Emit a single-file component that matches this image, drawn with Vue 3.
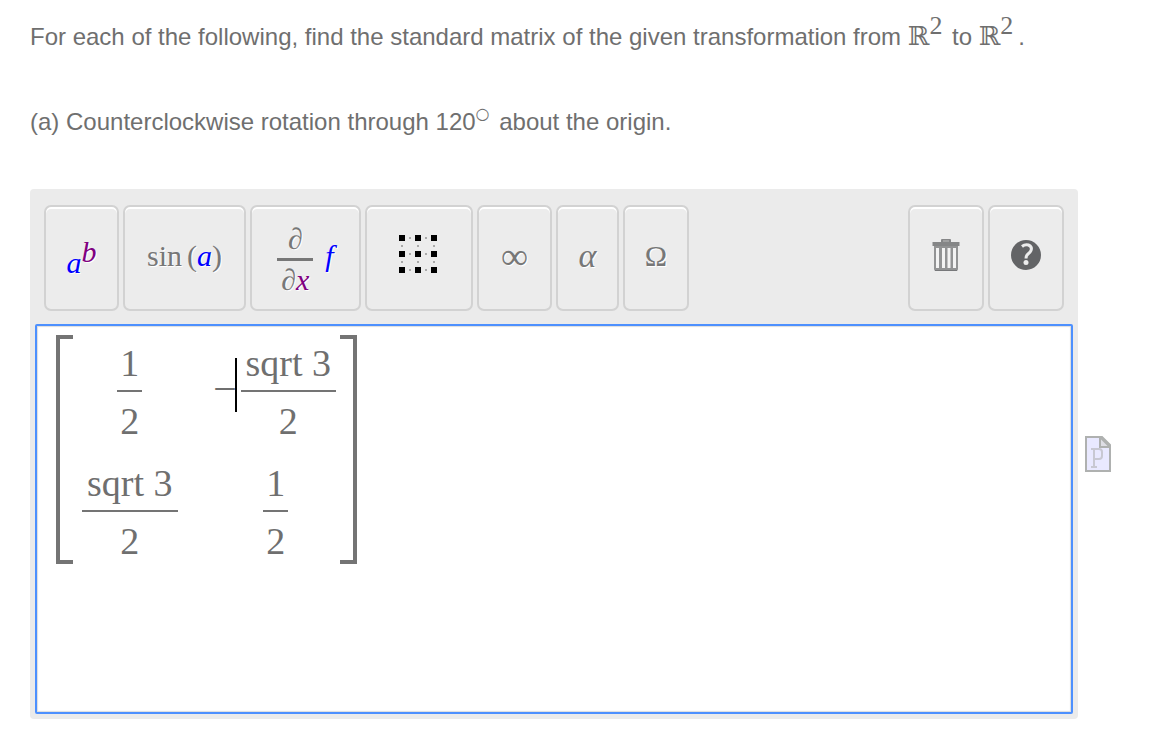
<script setup>
import { ref } from "vue";

const editor = ref(null);

const focusEditor = () => {
  editor.value.focus();
};

const dots = [0, 1, 2];
const smallDots = [0, 1];
</script>

<template>
  <main class="question">
    <p class="intro">
      For each of the following, find the standard matrix of the given transformation from
      <span class="math">ℝ<sup>2</sup></span> to <span class="math">ℝ<sup>2</sup></span>&hairsp;.
    </p>
    <p class="part">
      (a) Counterclockwise rotation through 120<sup class="degree">○</sup> about the origin.
    </p>

    <div class="answerRow">
      <section class="mathEditor">
        <div class="toolbar">
          <button type="button" class="tool power" aria-label="Exponent" @click="focusEditor">
            <span><i class="blue">a</i><sup><i class="purple">b</i></sup></span>
          </button>
          <button type="button" class="tool func" aria-label="Functions" @click="focusEditor">
            <span class="sine">sin<span class="argument">(<i class="blue">a</i>)</span></span>
          </button>
          <button type="button" class="tool calculus" aria-label="Calculus" @click="focusEditor">
            <span class="partial">
              <span class="partialTop">∂</span>
              <span class="partialBottom">∂<i class="purple">x</i></span>
            </span>
            <i class="blue">f</i>
          </button>
          <button type="button" class="tool grid" aria-label="Matrix" @click="focusEditor">
            <svg width="40" height="40" viewBox="0 0 40 40">
              <g v-for="r in dots" :key="r">
                <rect v-for="c in dots" :key="c" :x="c * 16" :y="r * 16" width="6" height="6" fill="#000" />
                <rect v-for="c in smallDots" :key="'h' + c" :x="10 + c * 16" :y="2 + r * 16" width="2" height="2" fill="#aaa" />
              </g>
              <g v-for="r in smallDots" :key="'v' + r">
                <rect v-for="c in dots" :key="c" :x="2 + c * 16" :y="10 + r * 16" width="2" height="2" fill="#aaa" />
              </g>
            </svg>
          </button>
          <button type="button" class="tool symbol" aria-label="Symbols" @click="focusEditor">∞</button>
          <button type="button" class="tool symbol alpha" aria-label="Greek lowercase" @click="focusEditor"><i>α</i></button>
          <button type="button" class="tool omega" aria-label="Greek uppercase" @click="focusEditor">Ω</button>
          <button type="button" class="tool action trash" aria-label="Clear">
            <svg width="28" height="32" viewBox="0 0 28 32">
              <path d="M9 3V1q0-1 1-1h8q1 0 1 1v2h8.500v4H.5V3z" fill="#858687" />
              <path d="M11 2h6" stroke="#bbb" />
              <path d="M2 7h24v23q0 2-2 2H4q-2 0-2-2z" fill="#929394" />
              <path d="M5.500 9v20M11.500 9v20M17 9v20M22.500 9v20" stroke="#f3f3f3" stroke-width="3" />
              <path d="M3 31.500h22" stroke="#77787a" />
            </svg>
          </button>
          <button type="button" class="tool action" aria-label="Help">
            <svg width="30" height="32" viewBox="0 0 30 32">
              <circle cx="15" cy="16" r="15" fill="#636466" />
              <path d="M11 7.500q3-2.500 6.500-1.500 4 1.500 2.500 5.500-.5 1.500-3 3.500-2 1.500-2 4.500" fill="none" stroke="#ececec" stroke-width="3" />
              <circle cx="15" cy="23.500" r="2.500" fill="#ececec" />
            </svg>
          </button>
        </div>

        <div ref="editor" class="entry" role="textbox" tabindex="0" aria-label="Answer">
          <div class="matrix">
            <span class="bracket left"></span>
            <div class="cells">
              <span class="cell">
                <span class="fraction short"><span>1</span><span>2</span></span>
              </span>
              <span class="cell">
                <span class="minus">–<span class="caret"></span></span>
                <span class="fraction"><span>sqrt 3</span><span>2</span></span>
              </span>
              <span class="cell">
                <span class="fraction"><span>sqrt 3</span><span>2</span></span>
              </span>
              <span class="cell">
                <span class="fraction short"><span>1</span><span>2</span></span>
              </span>
            </div>
            <span class="bracket right"></span>
          </div>
        </div>
      </section>

      <a class="preview" href="#" aria-label="Preview answer">
        <svg width="26" height="36" viewBox="0 0 26 36">
          <path d="M1 1h16l8 8v26H1z" fill="#e9e9ff" stroke="#afb1b0" stroke-width="2" />
          <path d="M15 1v10h10z" fill="#dedee5" stroke="#afb1b0" stroke-width="2" />
          <path d="M6 13h8q3 0 3 3v4q0 3-3 3H9M9 13v18M6 31h6" fill="none" stroke="#c8c8d2" stroke-width="2" />
        </svg>
      </a>
    </div>
  </main>
</template>

<style>
body {
  margin: 0;
  background: #fff;
}
</style>

<style scoped>
.question {
  padding: 20px 30px 16px;
  color: #6f6f6f;
  font-family: "Liberation Sans", Arial, sans-serif;
  font-size: 24px;
  line-height: 34px;
}

p {
  margin: 0;
}

.part {
  margin: 51px 0 50px;
}

sup {
  line-height: 0;
  vertical-align: 11px;
}

.math {
  font-family: "Liberation Serif", "DejaVu Serif", serif;
  font-size: 26px;
  line-height: 0;
}

.math sup {
  font-size: 26px;
  margin-right: 3px;
}

.degree {
  font-family: "DejaVu Sans", sans-serif;
  font-size: 16px;
  margin-right: 3px;
}

.answerRow {
  display: flex;
  align-items: center;
  gap: 7px;
}

.mathEditor {
  flex: 1;
  max-width: 1048px;
  box-sizing: border-box;
  padding: 16px 5px 5px;
  border-radius: 4px;
  background: #ebebeb;
}

.toolbar {
  display: flex;
  gap: 4px;
  padding: 0 9px;
  margin-bottom: 13px;
}

.tool {
  display: flex;
  align-items: center;
  justify-content: center;
  box-sizing: border-box;
  width: 75px;
  height: 106px;
  padding: 0 0 4px;
  border: 2px solid #d2d2d2;
  border-radius: 7px;
  background: #ececec;
  box-shadow: inset 0 2px 0 #fff;
  color: #777;
  font-family: "Liberation Serif", "Times New Roman", serif;
  font-size: 30px;
  text-shadow: 1px 1px 0 #fff;
}

.power {
  padding-top: 14px;
}

.power sup {
  font-size: 30px;
}

.func {
  width: 123px;
}

.sine {
  display: flex;
  gap: 5px;
}

.calculus {
  width: 111px;
  gap: 12px;
}

.partial {
  display: flex;
  flex-direction: column;
  align-items: center;
  width: 36px;
  line-height: 38px;
  padding-top: 6px;
}

.partialTop {
  width: 100%;
  border-bottom: 3px solid #777;
}

.grid {
  width: 108px;
  padding-bottom: 6px;
}

.symbol {
  font-size: 38px;
}

.alpha {
  width: 63px;
  font-size: 34px;
}

.omega {
  width: 66px;
}

.trash {
  margin-left: auto;
}

.action {
  width: 76px;
  padding-bottom: 6px;
}

.blue {
  color: #00f;
}

.purple {
  color: #800080;
}

.entry {
  box-sizing: border-box;
  min-height: 390px;
  padding: 9px 19px;
  border: 2px solid #4d90fe;
  border-radius: 2px;
  background: #fff;
  box-shadow: inset 0 0 1px 1px #ddd;
  font-family: "Liberation Serif", "Times New Roman", serif;
  font-size: 38px;
  line-height: 44px;
  outline: none;
}

.matrix {
  display: inline-flex;
}

.bracket {
  width: 13px;
  border: 4px solid #747474;
}

.left {
  border-right: none;
}

.right {
  border-left: none;
}

.cells {
  display: grid;
  grid-template-columns: auto auto;
  gap: 18px 38px;
  padding: 6px 4px 1px 9px;
}

.cell {
  display: flex;
  align-items: center;
  justify-content: center;
}

.fraction {
  display: flex;
  flex-direction: column;
  text-align: center;
}

.fraction > :first-child {
  padding: 0 5px 5px;
  border-bottom: 2px solid #747474;
}

.fraction > :last-child {
  padding-top: 7px;
}

.fraction.short > :first-child {
  padding: 0 3px 5px;
}

.minus {
  display: flex;
  align-items: center;
  padding: 0 4px 14px 0;
}

.caret {
  width: 2px;
  height: 54px;
  background: #000;
}

.preview {
  display: flex;
}
</style>
